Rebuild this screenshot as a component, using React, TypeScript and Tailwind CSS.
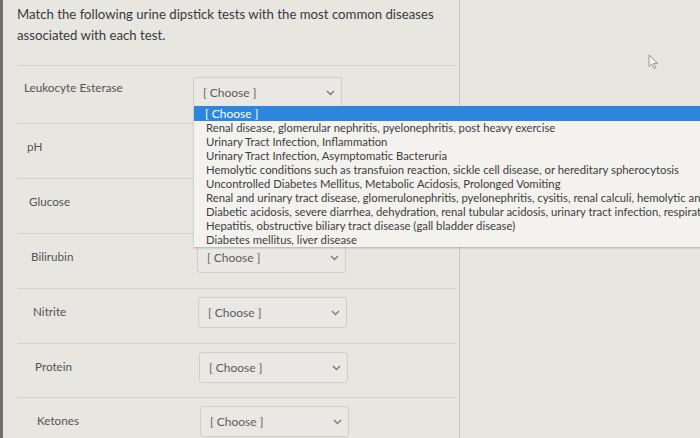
import React from "react";

const rows = [
  { label: "Leukocyte Esterase", lp: "pl-[7px]", sm: "ml-[0px]", h: "h-[58px]", pt: "pt-[11px]", lt: "pt-[13px]" },
  { label: "pH", lp: "pl-[10px]", sm: "ml-[2px]", h: "h-[55px]", pt: "pt-[8px]", lt: "pt-[14px]" },
  { label: "Glucose", lp: "pl-[12px]", sm: "ml-[3px]", h: "h-[55px]", pt: "pt-[8px]", lt: "pt-[14px]" },
  { label: "Bilirubin", lp: "pl-[14px]", sm: "ml-[4px]", h: "h-[55px]", pt: "pt-[8px]", lt: "pt-[14px]" },
  { label: "Nitrite", lp: "pl-[16px]", sm: "ml-[5px]", h: "h-[55px]", pt: "pt-[8px]", lt: "pt-[14px]" },
  { label: "Protein", lp: "pl-[18px]", sm: "ml-[6px]", h: "h-[54px]", pt: "pt-[8px]", lt: "pt-[14px]" },
  { label: "Ketones", lp: "pl-[20px]", sm: "ml-[7px]", h: "h-[55px]", pt: "pt-[8px]", lt: "pt-[14px]" },
];

const options = [
  "Renal disease, glomerular nephritis, pyelonephritis, post heavy exercise",
  "Urinary Tract Infection, Inflammation",
  "Urinary Tract Infection, Asymptomatic Bacteruria",
  "Hemolytic conditions such as transfuion reaction, sickle cell disease, or hereditary spherocytosis",
  "Uncontrolled Diabetes Mellitus, Metabolic Acidosis, Prolonged Vomiting",
  "Renal and urinary tract disease, glomerulonephritis, pyelonephritis, cysitis, renal calculi, hemolytic anemia",
  "Diabetic acidosis, severe diarrhea, dehydration, renal tubular acidosis, urinary tract infection, respiratory alkalosis",
  "Hepatitis, obstructive biliary tract disease (gall bladder disease)",
  "Diabetes mellitus, liver disease",
];

function Chevron() {
  return (
    <svg width="9" height="6" viewBox="0 0 9 6" className="shrink-0">
      <path d="M1 1 L4.5 4.5 L8 1" fill="none" stroke="#7a7a7a" strokeWidth="1.4" />
    </svg>
  );
}

function Select() {
  return (
    <div className="w-[149px] h-[31px] border border-[#cfcecb] rounded-[3px] bg-[#e9e8e4] flex items-center justify-between pl-[9px] pr-[6px]">
      <span className="text-[12px] text-[#5c5c5c]">[ Choose ]</span>
      <Chevron />
    </div>
  );
}

export default function App() {
  return (
    <div
      className="relative w-[700px] h-[438px] overflow-hidden bg-[#e7e6e1] flex"
      style={{ fontFamily: "Lato, 'Open Sans', sans-serif" }}
    >
      <div className="w-[3px] bg-[#6e6e6e] shrink-0" />
      <div className="w-[457px] shrink-0 border-r border-[#c9c8c4] pl-[14px] pr-[3px]">
        <div className="pt-[4px] h-[65px] text-[13.2px] leading-[21px] text-[#3a3a3a]">
          Match the following urine dipstick tests with the most common diseases
          <br />
          associated with each test.
        </div>
        {rows.map((r) => (
          <div key={r.label} className={`flex border-t border-[#d3d2ce] ${r.h}`}>
            <div className={`w-[176px] shrink-0 text-[11.7px] text-[#555555] ${r.lp} ${r.lt}`}>{r.label}</div>
            <div className={`${r.sm} ${r.pt}`}>
              <Select />
            </div>
          </div>
        ))}
      </div>
      <div className="flex-1" />

      {/* open dropdown list */}
      <div className="absolute left-[194px] top-[106px] w-[560px] bg-[#f3f2ee] shadow-[0_1px_2px_rgba(0,0,0,0.25)] text-[11.3px] leading-[14px] text-[#3d3d3d] whitespace-nowrap">
        <div className="h-[15px] bg-[#2d86dc] text-white text-[12px] pl-[11px] leading-[15px]">[ Choose ]</div>
        {options.map((o) => (
          <div key={o} className="h-[14px] pl-[12px] overflow-hidden">
            {o}
          </div>
        ))}
      </div>

      {/* mouse cursor */}
      <svg className="absolute left-[648px] top-[54px]" width="12" height="16" viewBox="0 0 12 16">
        <path d="M1 1 L1 12.5 L3.8 10 L6 14.5 L7.8 13.6 L5.7 9.3 L9.6 9.3 Z" fill="#f4f4f2" stroke="#8a8a8a" strokeWidth="0.9" strokeLinejoin="round" />
      </svg>
    </div>
  );
}
